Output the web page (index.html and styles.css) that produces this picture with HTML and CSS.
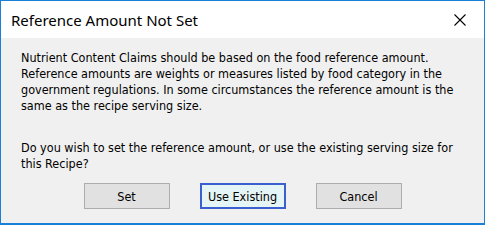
FILE: index.html
```html
<!DOCTYPE html>
<html lang="en">
  <head>
    <meta charset="utf-8" />
    <title>Reference Amount Not Set</title>
    <link rel="stylesheet" href="styles.css">
  </head>

  <body>
    <section class="dialog">
      <header class="titlebar">
        <h1>Reference Amount Not Set</h1>
        <svg class="close" width="12" height="12" viewBox="0 0 12 12">
          <path d="M0.5 0.5 L11.5 11.5 M11.5 0.5 L0.5 11.5" stroke="#000" stroke-width="1.1" fill="none" />
        </svg>
      </header>

      <main class="content">
        <p>Nutrient Content Claims should be based on the food reference amount.<br>
        Reference amounts are weights or measures listed by food category in the<br>
        government regulations. In some circumstances the reference amount is the<br>
        same as the recipe serving size.</p>
        <p class="ask">Do you wish to set the reference amount, or use the existing serving size for<br>
        this Recipe?</p>

        <div class="buttons">
          <button class="btn">Set</button>
          <button class="btn default">Use Existing</button>
          <button class="btn">Cancel</button>
        </div>
      </main>
    </section>
  </body>
</html>
```

FILE: styles.css
```css
body {
  margin: 0;
  font-family: "DejaVu Sans Condensed", "DejaVu Sans", sans-serif;
}

.dialog {
  width: 485px;
  height: 225px;
  box-sizing: border-box;
  border: 1px solid #1a80d6;
  border-bottom-width: 2px;
  display: flex;
  flex-direction: column;
  background-color: #f0f0f0;
}

.titlebar {
  height: 37px;
  background-color: white;
  display: flex;
  align-items: center;
  justify-content: space-between;
  padding: 0 18px 0 10px;
}

.titlebar h1 {
  margin: 0;
  font-family: "Noto Sans", sans-serif;
  font-weight: normal;
  font-size: 15px;
  color: #000;
}

.close {
  display: block;
}

.content {
  padding: 12px 0 0 20px;
  font-size: 12.5px;
  line-height: 16px;
  color: #000;
}

.content p {
  margin: 0;
}

.content .ask {
  margin-top: 26px;
}

.buttons {
  display: flex;
  justify-content: center;
  gap: 30px;
  margin: 11px 20px 0 0;
}

.btn {
  width: 86px;
  height: 26px;
  box-sizing: border-box;
  font-family: inherit;
  font-size: 12.5px;
  color: #000;
  background-color: #e1e1e1;
  border: 1px solid #adadad;
  padding: 0;
}

.btn.default {
  background-color: #e5f4f4;
  border: 2px solid #3b5fcf;
}
```
